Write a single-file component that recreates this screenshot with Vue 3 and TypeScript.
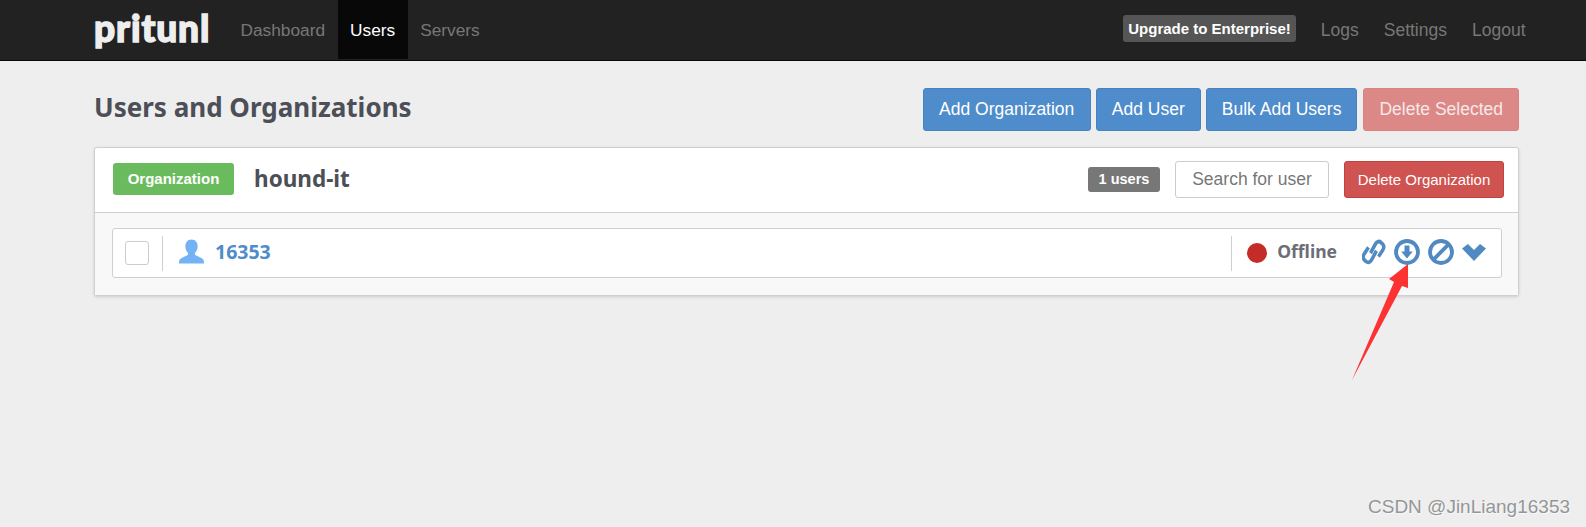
<script setup lang="ts">
const leftNav = [
  { label: 'Dashboard', active: false },
  { label: 'Users', active: true },
  { label: 'Servers', active: false },
]
const rightNav = ['Logs', 'Settings', 'Logout']
const actions = [
  { label: 'Add Organization', danger: false },
  { label: 'Add User', danger: false },
  { label: 'Bulk Add Users', danger: false },
  { label: 'Delete Selected', danger: true },
]
</script>

<template>
  <div class="page">
    <header class="navbar">
      <div class="brand">pritunl</div>
      <nav class="nav">
        <a v-for="item in leftNav" :key="item.label" class="nav-link" :class="{ active: item.active }">{{ item.label }}</a>
      </nav>
      <div class="nav-right">
        <span class="upgrade">Upgrade to Enterprise!</span>
        <a v-for="item in rightNav" :key="item" class="nav-link">{{ item }}</a>
      </div>
    </header>

    <main class="content">
      <div class="page-head">
        <h1>Users and Organizations</h1>
        <div class="actions">
          <button v-for="a in actions" :key="a.label" class="btn" :class="{ faded: a.danger }">{{ a.label }}</button>
        </div>
      </div>

      <section class="panel">
        <div class="panel-head">
          <span class="org-label">Organization</span>
          <span class="org-name">hound-it</span>
          <span class="count">1 users</span>
          <div class="search">Search for user</div>
          <button class="del-org">Delete Organization</button>
        </div>
        <div class="panel-body">
          <div class="user-row">
            <span class="check"></span>
            <span class="sep"></span>
            <svg class="user-icon" viewBox="0 0 26 25" width="25" height="25">
              <path fill="#72b2f5" d="M13 0c3.900 0 6.400 3 6.400 7 0 2.900-1.100 5.200-2.600 6.700-.5.500-.5 1.900.2 2.500 1.800 1.300 7.400 3 8.600 5.300.4.800.4 2 .4 3.500H0c0-1.500 0-2.700.4-3.500 1.200-2.300 6.800-4 8.600-5.300.7-.6.7-2 .2-2.500C7.700 12.200 6.600 9.900 6.600 7c0-4 2.500-7 6.400-7z"/>
            </svg>
            <span class="user-name">16353</span>
            <span class="sep right"></span>
            <span class="dot"></span>
            <span class="status">Offline</span>
            <div class="tools">
              <svg viewBox="0 0 24 26" width="24" height="26" fill="none" stroke="#5189c1" stroke-width="3.400">
                <g transform="translate(0 -2) scale(1 1.150)">
                  <path d="M8.500 14 13.500 6C15 3.500 17.500 3.500 19 4.800L20.500 6C22 7.500 22 9.500 21 11L16.500 17"/>
                  <path d="M14.500 12 9.500 20C8 22.500 5.500 22.500 4 21.200L2.500 20C1 18.500 1 16.500 2 15L6.500 9"/>
                </g>
              </svg>
              <svg viewBox="0 0 26 26" width="26" height="26">
                <circle cx="13" cy="13" r="11" fill="none" stroke="#5189c1" stroke-width="3.800"/>
                <path fill="#5189c1" d="M10.500 6.500h5v6h3.300L13 19.500l-5.800-7h3.300z"/>
              </svg>
              <svg viewBox="0 0 26 26" width="26" height="26" fill="none" stroke="#5189c1" stroke-width="3.800">
                <circle cx="13" cy="13" r="11"/>
                <path d="M20.800 5.200 5.200 20.800"/>
              </svg>
              <svg viewBox="0 0 24 17" width="24" height="17">
                <path fill="#5189c1" d="M0 4.500 6 0 12 6 18 0 24 4.500 12 17z"/>
              </svg>
            </div>
          </div>
        </div>
      </section>
    </main>

    <svg class="arrow" viewBox="0 0 70 130" width="70" height="130">
      <path fill="#fd3232" d="M66 4 66 28 60 26 10 120 52 22 47 19z"/>
    </svg>
    <span class="watermark">CSDN @JinLiang16353</span>
  </div>
</template>

<style scoped>
.page {
  position: relative;
  height: 527px;
  overflow: hidden;
  background: #eeeeee;
  font-family: "Liberation Sans", Arial, sans-serif;
}
.navbar {
  display: flex;
  align-items: stretch;
  height: 60px;
  padding: 0 48px 0 94px;
  background: #222222;
  border-bottom: 1px solid #080808;
  box-sizing: content-box;
}
.brand {
  width: 134px;
  color: #eeeeee;
  font-family: "Lato", sans-serif;
  font-weight: 900;
  font-size: 37px;
  line-height: 56px;
  letter-spacing: 0.9px;
  -webkit-text-stroke: 1.400px #eeeeee;
}
.nav, .nav-right {
  display: flex;
  align-items: stretch;
  height: 59px;
}
.nav-right { margin-left: auto; }
.nav-link {
  display: flex;
  align-items: center;
  padding: 1px 12.500px 0;
  color: #777777;
  font-size: 17.300px;
}
.nav-right .nav-link { font-size: 17.500px; }
.nav-link.active {
  background: #080808;
  color: #ffffff;
}
.upgrade {
  align-self: flex-start;
  margin: 15px 12px 0 0;
  padding: 0 5.500px;
  height: 27px;
  line-height: 27px;
  border-radius: 3px;
  background: #555555;
  color: #ffffff;
  font-size: 15px;
  font-weight: 700;
}
.content { padding: 27px 67px 0 94px; }
.page-head {
  display: flex;
  align-items: center;
  justify-content: space-between;
  height: 43px;
  margin-bottom: 16px;
}
h1 {
  margin: 0;
  padding-bottom: 5px;
  color: #4c4f57;
  font-family: "Noto Sans", sans-serif;
  font-weight: 700;
  font-size: 26px;
}
.actions { display: flex; gap: 5px; }
.btn {
  height: 43px;
  padding: 0 15px;
  border: 1px solid #4882bf;
  border-radius: 3px;
  background: #4f8ccb;
  color: #ffffff;
  font: 17.500px "Liberation Sans", Arial, sans-serif;
}
.btn:first-child { padding: 0 15.500px; }
.btn.faded {
  margin-left: 1px;
  background: #dc8886;
  border-color: #d98280;
  color: #f5e9e9;
}
.panel {
  border: 1px solid #d0d0d0;
  border-radius: 3px;
  background: #ffffff;
  box-shadow: 0 1px 3px rgba(0, 0, 0, 0.14);
}
.panel-head {
  display: flex;
  align-items: center;
  box-sizing: content-box;
  height: 62px;
  padding: 0 14px 2px 18px;
  border-bottom: 1px solid #d0d0d0;
}
.org-label {
  width: 121px;
  height: 32px;
  line-height: 32px;
  text-align: center;
  border-radius: 3px;
  background: #6abb5e;
  color: #ffffff;
  font-size: 15px;
  font-weight: 700;
}
.org-name {
  margin-left: 20px;
  padding-bottom: 2px;
  color: #4c4f57;
  font-family: "Noto Sans", sans-serif;
  font-weight: 700;
  font-size: 22.500px;
}
.count {
  margin-left: auto;
  width: 72px;
  height: 25px;
  line-height: 25px;
  text-align: center;
  border-radius: 3px;
  background: #777777;
  color: #ffffff;
  font-size: 14.500px;
  font-weight: 700;
}
.search {
  box-sizing: border-box;
  width: 154px;
  height: 37px;
  margin-left: 15px;
  line-height: 35px;
  text-align: center;
  border: 1px solid #cccccc;
  border-radius: 3px;
  color: #777777;
  font-size: 17.500px;
}
.del-org {
  width: 160px;
  height: 37px;
  margin-left: 15px;
  padding: 0;
  border: 1px solid #c4413e;
  border-radius: 3px;
  background: #cf5350;
  color: #ffffff;
  font: 15px "Liberation Sans", Arial, sans-serif;
}
.panel-body {
  height: 82px;
  padding: 15px 16px 0 17px;
  box-sizing: border-box;
  background: #f8f8f8;
}
.user-row {
  display: flex;
  align-items: center;
  box-sizing: border-box;
  height: 50px;
  padding: 0 15px 0 12px;
  border: 1px solid #cfcfcf;
  border-radius: 3px;
  background: #ffffff;
}
.check {
  box-sizing: border-box;
  width: 24px;
  height: 24px;
  border: 1px solid #cccccc;
  border-radius: 3px;
}
.sep {
  width: 1px;
  height: 35px;
  margin: 0 16px 0 13px;
  background: #cfcfcf;
}
.sep.right { margin: 0 15px 0 auto; }
.user-icon { margin: 0 11px 3px 0; }
.user-name {
  padding-bottom: 4px;
  color: #4f8ccb;
  font-family: "Noto Sans", sans-serif;
  font-weight: 700;
  font-size: 19.500px;
}
.dot {
  width: 20px;
  height: 20px;
  border-radius: 50%;
  background: #c52c28;
}
.status {
  margin-left: 10px;
  padding-bottom: 5px;
  color: #6b6e75;
  font-family: "Noto Sans", sans-serif;
  font-weight: 700;
  font-size: 17.500px;
}
.tools {
  display: flex;
  align-items: center;
  gap: 8px;
  margin-left: 25px;
}
.tools svg { margin-bottom: 2px; }
.arrow {
  position: absolute;
  left: 1342px;
  top: 260px;
}
.watermark {
  position: absolute;
  left: 1368px;
  top: 496px;
  color: #969696;
  font-size: 19px;
  text-shadow: 1px 1px 1px rgba(255, 255, 255, 0.7);
}
</style>

<style>
html, body { margin: 0; background: #eeeeee; }
</style>
